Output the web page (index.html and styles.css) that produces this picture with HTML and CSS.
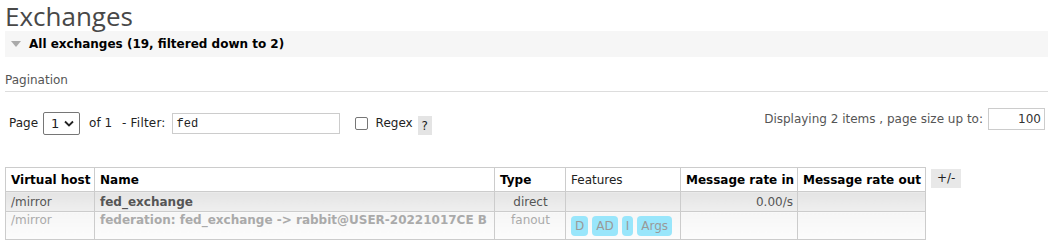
FILE: index.html
```html
<!DOCTYPE html>
<html>
<head>
<meta charset="utf-8">
<link rel="stylesheet" href="styles.css">
</head>
<body>
<h1 class="title">Exchanges</h1>
<div class="section">
  <div class="section-head"><span class="tri"></span><span class="section-title">All exchanges (19, filtered down to 2)</span></div>
  <div class="pagination-label">Pagination</div>
  <div class="controls">
    <div class="left-controls">
      <span>Page</span>
      <span class="select"><span>1</span><svg width="10" height="7" viewBox="0 0 10 7"><path d="M1 1.5 L5 5.5 L9 1.5" fill="none" stroke="#222" stroke-width="1.8"/></svg></span>
      <span class="of">of 1</span>
      <span class="flabel">- Filter:</span>
      <span class="filter">fed</span>
      <span class="checkbox"></span>
      <span class="regex">Regex</span>
      <span class="help">?</span>
    </div>
    <div class="right-controls">
      <span>Displaying 2 items , page size up to:</span>
      <span class="pagesize">100</span>
    </div>
  </div>
  <div class="table-wrap">
    <table class="list">
      <colgroup>
        <col class="c-vhost"><col class="c-name"><col class="c-type"><col class="c-feat"><col class="c-in"><col class="c-out">
      </colgroup>
      <thead>
        <tr>
          <th>Virtual host</th>
          <th>Name</th>
          <th>Type</th>
          <th class="plain">Features</th>
          <th>Message rate in</th>
          <th>Message rate out</th>
        </tr>
      </thead>
      <tbody>
        <tr class="alt1">
          <td>/mirror</td>
          <td class="name">fed_exchange</td>
          <td class="center">direct</td>
          <td></td>
          <td class="right">0.00/s</td>
          <td></td>
        </tr>
        <tr class="alt2 internal">
          <td class="top">/mirror</td>
          <td class="name top">federation: fed_exchange -&gt; rabbit@USER-20221017CE B</td>
          <td class="center top">fanout</td>
          <td class="feats"><span class="badge">D</span><span class="badge">AD</span><span class="badge">I</span><span class="badge">Args</span></td>
          <td></td>
          <td></td>
        </tr>
      </tbody>
    </table>
    <span class="toggle">+/-</span>
  </div>
</div>
</body>
</html>
```
FILE: styles.css
```css
* { box-sizing: border-box; }
body {
  margin: 0;
  padding: 0 0 0 5px;
  font-family: "DejaVu Sans", Verdana, sans-serif;
  font-size: 12px;
  color: #484848;
  background: #fff;
}
.title {
  margin: 0;
  padding-top: 1px;
  font-family: "Open Sans", "Noto Sans", sans-serif;
  font-weight: normal;
  font-size: 26px;
  line-height: 30px;
  color: #484848;
}
.section-head {
  height: 26px;
  background: #f6f6f6;
  display: flex;
  align-items: center;
  padding-left: 6px;
}
.tri {
  width: 0; height: 0;
  border-left: 5px solid transparent;
  border-right: 5px solid transparent;
  border-top: 6px solid #aaa;
  margin-right: 8px;
}
.section-title {
  font-weight: bold;
  color: #000;
  font-size: 12px;
}
.pagination-label {
  margin-top: 16px;
  padding-bottom: 4px;
  border-bottom: 1px solid #ddd;
  font-size: 12px;
  color: #555;
  line-height: 14px;
}
.controls {
  display: flex;
  justify-content: space-between;
  align-items: flex-start;
  margin-top: 16px;
  padding-left: 4px;
}
.left-controls {
  display: flex;
  align-items: center;
  margin-top: 3px;
  color: #222;
}
.select {
  display: inline-flex;
  align-items: center;
  justify-content: space-between;
  width: 37px;
  height: 23px;
  border: 1px solid #767676;
  border-radius: 2px;
  margin-left: 5px;
  padding: 0 5px 0 7px;
  font-size: 13px;
}
.of { margin-left: 9px; margin-right: 10px; }
.flabel { letter-spacing: 0.2px; }
.filter {
  display: inline-block;
  width: 168px;
  height: 21px;
  margin-left: 6px;
  border: 1px solid #ccc;
  padding: 3px 4px;
  font-family: "Liberation Mono", monospace;
  font-size: 12px;
  color: #222;
}
.checkbox {
  width: 13px; height: 13px;
  border: 1px solid #767676;
  border-radius: 2px;
  margin-left: 15px;
}
.regex { margin-left: 8px; }
.help {
  margin-left: 5px;
  background: #e4e4e4;
  width: 14px;
  height: 19px;
  text-align: center;
  padding-top: 3px;
  align-self: flex-end;
  margin-top: 5px;
  line-height: 14px;
}
.right-controls {
  display: flex;
  align-items: center;
  gap: 5px;
  margin-right: 3px;
  color: #555;
}
.pagesize {
  display: inline-block;
  width: 57px;
  height: 22px;
  border: 1px solid #ccc;
  text-align: right;
  padding: 3px 3px;
  color: #333;
}
.table-wrap {
  display: flex;
  align-items: flex-start;
  margin-top: 32px;
}
table.list {
  border-collapse: collapse;
  table-layout: fixed;
  width: 920px;
}
table.list th, table.list td {
  border: 1px solid #ccc;
  padding: 0 4px 0 5px;
  text-align: left;
  white-space: nowrap;
  overflow: visible;
}
table.list th {
  height: 24px;
  font-weight: bold;
  color: #000;
  background: #fff;
}
table.list th.plain { font-weight: normal; color: #222; }
.c-vhost { width: 89px; }
.c-name { width: 400px; }
.c-type { width: 71px; }
.c-feat { width: 115px; }
.c-in { width: 117px; }
.c-out { width: 128px; }
tr.alt1 td {
  height: 20px;
  background: linear-gradient(#e4e4e4, #efefef);
  color: #555;
}
tr.alt2 td {
  height: 28px;
  background: linear-gradient(#f6f6f6, #fcfcfc);
  color: #aaa;
}
td.name { font-weight: bold; color: #000; }
tr.internal td.name { color: #aaa; }
td.center { text-align: center !important; }
td.right { text-align: right !important; }
td.top { vertical-align: top; padding-top: 1px !important; }
td.feats { padding-top: 1px !important; padding-left: 5px !important; }
.badge {
  display: inline-block;
  background: #99e6fb;
  border-radius: 4px;
  padding: 3px 4px;
  margin-right: 4px;
  line-height: 14px;
  color: #999;
}
.toggle {
  margin-left: 5px;
  margin-top: 2px;
  background: #e8e8e8;
  padding: 3px 6px;
  color: #222;
  line-height: 13px;
}
```
